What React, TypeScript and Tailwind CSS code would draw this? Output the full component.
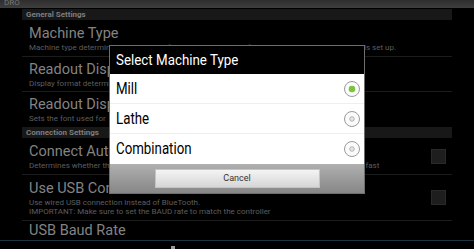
import React from "react";

const font = { fontFamily: "Roboto, 'Noto Sans', sans-serif" };

function Header({ label }: { label: string }) {
  return (
    <div className="mx-[22px] h-[11px] bg-[#181818] pl-[4px] text-[8px] leading-[11px] font-bold text-[#7d7d7d]">
      {label}
    </div>
  );
}

function Item({
  title,
  lines,
  height,
  checkbox,
  divider = true,
}: {
  title: string;
  lines: string[];
  height: number;
  checkbox?: boolean;
  divider?: boolean;
}) {
  return (
    <div
      className={`mx-[22px] flex items-center pl-[7px] pr-[6px] ${divider ? "border-b border-[#1c1c1c]" : ""}`}
      style={{ height }}
    >
      <div className="flex-1 flex flex-col overflow-hidden">
        <div className="text-[14.5px] leading-[18px] text-[#838383] whitespace-nowrap">{title}</div>
        {lines.map((l) => (
          <div key={l} className="text-[8px] leading-[9px] text-[#5e5e5e] whitespace-nowrap">
            {l}
          </div>
        ))}
      </div>
      {checkbox && <div className="w-[15px] h-[15px] shrink-0 bg-[#1e1e1e] border border-[#2a2a2a]" />}
    </div>
  );
}

function Radio({ on }: { on?: boolean }) {
  return (
    <svg width="18" height="18" viewBox="0 0 18 18">
      <circle cx="9" cy="9" r="7.5" fill="#fbfbfb" stroke="#9a9a9a" strokeWidth="1" />
      {on ? (
        <circle cx="9" cy="9" r="3.3" fill="#7cc23f" />
      ) : (
        <circle cx="9" cy="9" r="2.3" fill="#e4e4e4" stroke="#a8a8a8" strokeWidth="0.8" />
      )}
    </svg>
  );
}

export default function App() {
  const options = ["Mill", "Lathe", "Combination"];
  return (
    <div className="relative w-[474px] h-[249px] overflow-hidden bg-black" style={font}>
      <div className="h-[8px] bg-gradient-to-b from-[#2e2e2e] to-[#3e3e3e] pl-[4px] text-[8px] leading-[6px] text-[#777]">
        DRO
      </div>
      <div className="h-[1px]" />
      <Header label="General Settings" />
      <Item
        title="Machine Type"
        lines={["Machine type determines the number of axes and the layout of the readout display screen that is set up."]}
        height={37}
      />
      <Item title="Readout Display" lines={["Display format determines"]} height={35} />
      <Item title="Readout Display Font" lines={["Sets the font used for"]} height={35} divider={false} />
      <Header label="Connection Settings" />
      <Item
        title="Connect Automatically"
        lines={["Determines whether the app tries to connect to the controller on app startup. Try to connect as fast"]}
        height={37}
        checkbox
      />
      <Item
        title="Use USB Connection"
        lines={[
          "Use wired USB connection instead of BlueTooth.",
          "IMPORTANT: Make sure to set the BAUD rate to match the controller",
        ]}
        height={46}
        checkbox
      />
      <Item title="USB Baud Rate" lines={[]} height={19} divider={false} />
      <div className="h-[1px] bg-[#1d3540]" />
      <div className="relative h-[8px]">
        <div className="absolute left-[171px] top-[5px] w-[4px] h-[3px] bg-[#9a9a9a]" />
      </div>

      <div className="absolute left-[109px] top-[45px] w-[256px] flex flex-col border border-[#6e6e6e] bg-black">
        <div className="h-[28px] pl-[6px] flex items-center text-white">
          <span className="inline-block text-[15px] origin-left scale-x-[0.89] whitespace-nowrap">Select Machine Type</span>
        </div>
        {options.map((o, i) => (
          <div
            key={o}
            className={`h-[30px] bg-white flex items-center justify-between pl-[6px] pr-[3px] ${i < 2 ? "border-b border-[#efefef]" : ""}`}
          >
            <span className="inline-block text-[16px] text-black origin-left scale-x-[0.83]">{o}</span>
            <Radio on={i === 0} />
          </div>
        ))}
        <div className="h-[29px] bg-gradient-to-b from-[#b0b0b0] to-[#878787] flex items-center justify-center">
          <div className="w-[165px] h-[19px] bg-gradient-to-b from-[#f4f4f4] to-[#d6d6d6] border border-[#c4c4c4] flex items-center justify-center text-[9px] text-[#333]">
            Cancel
          </div>
        </div>
      </div>
    </div>
  );
}
